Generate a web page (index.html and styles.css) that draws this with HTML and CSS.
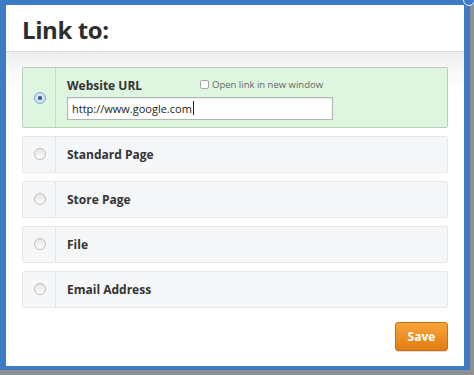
FILE: index.html
```html
<!DOCTYPE html>
<html>
<head>
<meta charset="utf-8">
<link rel="stylesheet" href="styles.css">
</head>
<body>
<div class="screen">
  <div class="frame">
    <div class="header"><h1 class="title">Link to:</h1></div>
    <div class="content">
      <div class="options">
        <div class="option option-active">
          <div class="radio-cell"><span class="radio radio-on"></span></div>
          <div class="option-body">
            <div class="url-top">
              <span class="label">Website URL</span>
              <label class="newwin"><span class="checkbox"></span>Open link in new window</label>
            </div>
            <div class="url-input">http://www.google.com<span class="caret"></span></div>
          </div>
        </div>
        <div class="option">
          <div class="radio-cell"><span class="radio"></span></div>
          <div class="option-body"><span class="label">Standard Page</span></div>
        </div>
        <div class="option">
          <div class="radio-cell"><span class="radio"></span></div>
          <div class="option-body"><span class="label">Store Page</span></div>
        </div>
        <div class="option">
          <div class="radio-cell"><span class="radio"></span></div>
          <div class="option-body"><span class="label">File</span></div>
        </div>
        <div class="option">
          <div class="radio-cell"><span class="radio"></span></div>
          <div class="option-body"><span class="label">Email Address</span></div>
        </div>
      </div>
      <div class="footer"><button class="save">Save</button></div>
    </div>
  </div>
  <span class="close-peek"></span>
</div>
</body>
</html>
```

FILE: styles.css
```css
html, body {
  margin: 0;
  padding: 0;
}
body {
  background: #8f9091;
  width: 474px;
  height: 375px;
  overflow: hidden;
  font-family: "Open Sans", "Liberation Sans", sans-serif;
}
.screen {
  position: relative;
  width: 474px;
  height: 375px;
}
.frame {
  width: 458px;
  height: 361px;
  border-style: solid;
  border-color: #3d7bc6;
  border-width: 5px 6px 4px 6px;
  background: #fff;
  display: flex;
  flex-direction: column;
}
.header {
  height: 47px;
  border-bottom: 1px solid #dcdcdc;
  display: flex;
  align-items: center;
  padding-left: 16px;
  box-sizing: border-box;
  flex: none;
}
.title {
  margin: 0;
  font-size: 24px;
  font-weight: 700;
  color: #2e2e2e;
  letter-spacing: -0.4px;
  padding-top: 2px;
}
.content {
  flex: 1;
  background: linear-gradient(#ececec 0px, #f7f7f7 16px, #ffffff 40px);
  padding: 15px 16px 0 16px;
  display: flex;
  flex-direction: column;
}
.options {
  display: flex;
  flex-direction: column;
  gap: 7.5px;
}
.option {
  display: flex;
  height: 37.5px;
  box-sizing: border-box;
  border: 1px solid #e6e7e8;
  border-radius: 2px;
  background: #f6f7f8;
}
.option-active {
  height: 61px;
  background: #def5df;
  border-color: #b9cfba;
}
.radio-cell {
  width: 32px;
  flex: none;
  border-right: 1px solid #e3e4e5;
  display: flex;
  align-items: center;
  justify-content: center;
}
.option-active .radio-cell {
  border-right-color: #c7dcc8;
}
.radio {
  width: 12px;
  height: 12px;
  border-radius: 50%;
  box-sizing: border-box;
  border: 1px solid #bdbdbd;
  background: linear-gradient(#e4e4e4, #ffffff);
  margin-left: 1px;
}
.radio-on {
  border-color: #7fa5cf;
  background: radial-gradient(circle, #3a5f8f 0, #3a5f8f 1.8px, #d4e6f7 2.4px, #c6dcf3 100%);
}
.option-body {
  flex: 1;
  display: flex;
  flex-direction: column;
  justify-content: center;
  padding-left: 11px;
}
.label {
  font-size: 12px;
  font-weight: 700;
  color: #333;
}
.url-top {
  display: flex;
  align-items: center;
  height: 18px;
  margin-top: 1px;
}
.url-top .label {
  width: 133px;
}
.newwin {
  display: flex;
  align-items: center;
  font-size: 9.5px;
  color: #666;
  margin-top: -2px;
}
.checkbox {
  width: 7px;
  height: 7px;
  border: 1px solid #a8a8a8;
  border-radius: 2px;
  background: #fff;
  margin-right: 3px;
}
.url-input {
  margin-top: 2px;
  width: 266px;
  height: 23px;
  box-sizing: border-box;
  border: 1px solid #b4b4b4;
  background: #fff;
  font-size: 11px;
  color: #222;
  padding-left: 4px;
  display: flex;
  align-items: center;
  box-shadow: inset 0 1px 1px rgba(0,0,0,0.08);
}
.caret {
  width: 1px;
  height: 14px;
  background: #222;
  margin-left: 1px;
}
.footer {
  display: flex;
  justify-content: flex-end;
  padding-top: 14px;
  padding-right: 0;
}
.save {
  width: 53px;
  height: 29px;
  border: 1px solid #d06d10;
  border-radius: 3px;
  background: linear-gradient(#f7a43a, #e27d12);
  color: #fff;
  font-family: "Open Sans", "Liberation Sans", sans-serif;
  font-weight: 700;
  font-size: 12px;
  padding: 0;
  box-shadow: 0 1px 1px rgba(0,0,0,0.15);
}
.close-peek {
  position: absolute;
  top: -6px;
  left: 463px;
  width: 10px;
  height: 10px;
  border-radius: 50%;
  border: 1px solid #eaf2fb;
  background: #3d7bc6;
}
```
